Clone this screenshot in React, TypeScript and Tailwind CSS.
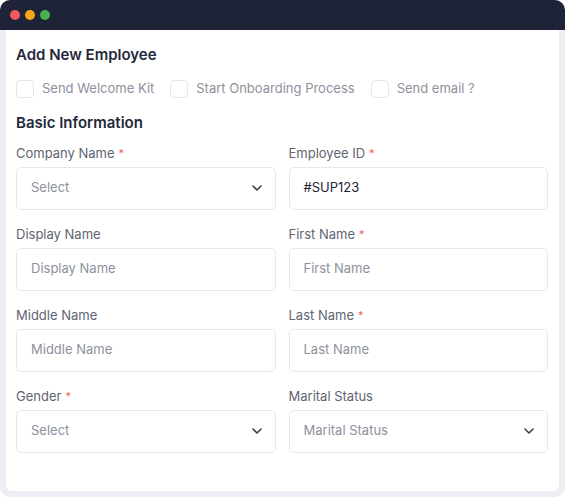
import { ChevronDown } from "lucide-react";

type Field = {
  label: string;
  required?: boolean;
  placeholder: string;
  value?: string;
  select?: boolean;
};

const fields: Field[] = [
  { label: "Company Name", required: true, placeholder: "Select", select: true },
  { label: "Employee ID", required: true, placeholder: "", value: "#SUP123" },
  { label: "Display Name", placeholder: "Display Name" },
  { label: "First Name", required: true, placeholder: "First Name" },
  { label: "Middle Name", placeholder: "Middle Name" },
  { label: "Last Name", required: true, placeholder: "Last Name" },
  { label: "Gender", required: true, placeholder: "Select", select: true },
  { label: "Marital Status", placeholder: "Marital Status", select: true },
];

const checks = ["Send Welcome Kit", "Start Onboarding Process", "Send email ?"];

function FormField({ field }: { field: Field }) {
  return (
    <div className="flex flex-col gap-[5px]">
      <label className="text-[13px] leading-[18px] text-[#5f6472]">
        {field.label}
        {field.required && <span className="ml-1 align-top text-[11px] text-[#f06262]">*</span>}
      </label>
      <div className="flex h-[43px] items-center justify-between rounded-[5px] border border-[#e6e8ee] bg-white pl-[14px] pr-[10px]">
        {field.value ? (
          <span className="text-[13px] text-[#1f2433]">{field.value}</span>
        ) : (
          <span className="text-[13px] text-[#8d919d]">{field.placeholder}</span>
        )}
        {field.select && <ChevronDown className="h-[16px] w-[16px] text-[#3b3f4a]" strokeWidth={2.4} />}
      </div>
    </div>
  );
}

export default function App() {
  return (
    <div
      className="h-[497px] w-[565px] overflow-hidden rounded-[10px] bg-[#eceef3]"
      style={{ fontFamily: "Inter, 'Open Sans', sans-serif" }}
    >
      <div className="flex h-[30px] items-center gap-[5px] bg-[#1f2337] pl-[10px]">
        <span className="h-[10px] w-[10px] rounded-full bg-[#f0595f]" />
        <span className="h-[10px] w-[10px] rounded-full bg-[#f7a51a]" />
        <span className="h-[10px] w-[10px] rounded-full bg-[#4caf50]" />
      </div>
      <div className="mx-[6px] h-[461px] rounded-b-[6px] bg-white pl-[10px] pr-[11px] pt-[15px]">
        <h2 className="text-[15px] font-semibold leading-[20px] text-[#23283a]">Add New Employee</h2>
        <div className="mt-[14px] flex items-center">
          {checks.map((c) => (
            <label key={c} className="mr-[16px] flex items-center gap-[8px] text-[13px] text-[#8d919d]">
              <span className="h-[18px] w-[18px] rounded-[4px] border border-[#e3e5eb] bg-white" />
              {c}
            </label>
          ))}
        </div>
        <h2 className="mt-[14px] text-[15px] font-semibold leading-[20px] text-[#23283a]">Basic Information</h2>
        <div className="mt-[11px] grid grid-cols-2 gap-x-[13px] gap-y-[15px]">
          {fields.map((f) => (
            <FormField key={f.label} field={f} />
          ))}
        </div>
      </div>
    </div>
  );
}
